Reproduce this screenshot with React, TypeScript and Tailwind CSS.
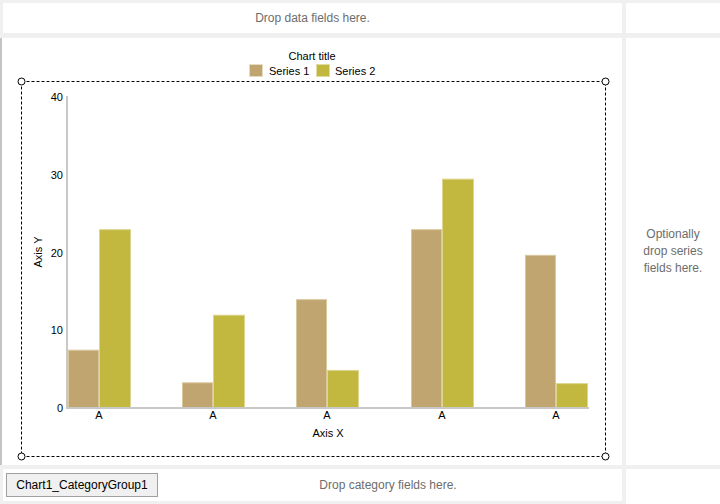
const s1 = [7.5, 3.3, 14, 23, 19.7];
const s2 = [23, 12, 4.9, 29.5, 3.2];
const groupX = [66, 180, 294, 409, 523];
const base = 370;
const unit = 7.775;

function ChartSvg() {
  const ticks = [0, 10, 20, 30, 40];
  return (
    <svg width={620} height={427} className="block" style={{ fontFamily: '"Liberation Sans", Arial, sans-serif' }}>
      <text x={310} y={22} fontSize={11} textAnchor="middle" fill="#000">Chart title</text>
      <rect x={247.5} y={26.5} width={13} height={12} fill="#c0a570" stroke="#e6dcc4" />
      <text x={267} y={37} fontSize={11} fill="#000">Series 1</text>
      <rect x={314.5} y={26.5} width={13} height={12} fill="#c2b840" stroke="#e2dca0" />
      <text x={333} y={37} fontSize={11} fill="#000">Series 2</text>

      <line x1={65} y1={58} x2={65} y2={371} stroke="#c8c8c8" strokeWidth={2} />
      {ticks.map((t) => (
        <text key={t} x={61} y={base - t * unit + 4} fontSize={11} textAnchor="end" fill="#000">{t}</text>
      ))}

      {groupX.map((gx, i) => {
        const h1 = s1[i] * unit;
        const h2 = s2[i] * unit;
        return (
          <g key={i}>
            <rect x={gx + 0.5} y={base - h1 + 0.5} width={30} height={h1 - 0.5} fill="#c0a570" stroke="#d8c89c" strokeWidth={1} />
            <rect x={gx + 31.5} y={base - h2 + 0.5} width={31} height={h2 - 0.5} fill="#c2b840" stroke="#ddd690" strokeWidth={1} />
            <text x={gx + 31} y={381} fontSize={11} textAnchor="middle" fill="#000">A</text>
          </g>
        );
      })}
      <line x1={64} y1={370} x2={587} y2={370} stroke="#c8c8c8" strokeWidth={2} />

      <text x={326} y={399} fontSize={11} textAnchor="middle" fill="#000">Axis X</text>
      <text x={0} y={0} fontSize={11} textAnchor="middle" fill="#000" transform="translate(40 214) rotate(-90)">Axis Y</text>

      <rect x={19.5} y={43.5} width={584} height={375} fill="none" stroke="#000" strokeDasharray="3 2" />
      {[[19.5, 43.5], [603.5, 43.5], [19.5, 418.5], [603.5, 418.5]].map(([cx, cy], i) => (
        <circle key={i} cx={cx} cy={cy} r={3.5} fill="#fff" stroke="#000" />
      ))}
    </svg>
  );
}

export default function App() {
  return (
    <div className="w-[720px] h-[504px] bg-[#f0f0f0] pt-[3px] flex flex-col overflow-hidden font-['Liberation_Sans',Arial,sans-serif]">
      <div className="flex h-[30px] gap-[4px]">
        <div className="ml-[3px] w-[619px] bg-white flex items-center justify-center text-[12px] text-[#6d6d6d]">
          Drop data fields here.
        </div>
        <div className="flex-1 bg-white" />
      </div>
      <div className="flex h-[427px] gap-[4px] mt-[5px]">
        <div className="w-[622px] bg-white border-l-2 border-[#c4c4c4]">
          <ChartSvg />
        </div>
        <div className="flex-1 bg-white flex items-center justify-center text-center text-[12px] leading-[17px] text-[#6d6d6d]">
          <p>
            Optionally
            <br />
            drop series
            <br />
            fields here.
          </p>
        </div>
      </div>
      <div className="flex flex-1 gap-[4px] mt-[4px]">
        <div className="ml-[3px] w-[619px] h-[32px] bg-white flex items-center pl-[3px]">
          <div className="h-[24px] w-[152px] bg-[#f0f0f0] border border-[#a0a0a0] flex items-center justify-center text-[12px] text-[#000]">
            Chart1_CategoryGroup1
          </div>
          <div className="flex-1 text-center text-[12px] text-[#6d6d6d] pr-[4px]">Drop category fields here.</div>
        </div>
        <div className="flex-1 bg-white" />
      </div>
    </div>
  );
}
